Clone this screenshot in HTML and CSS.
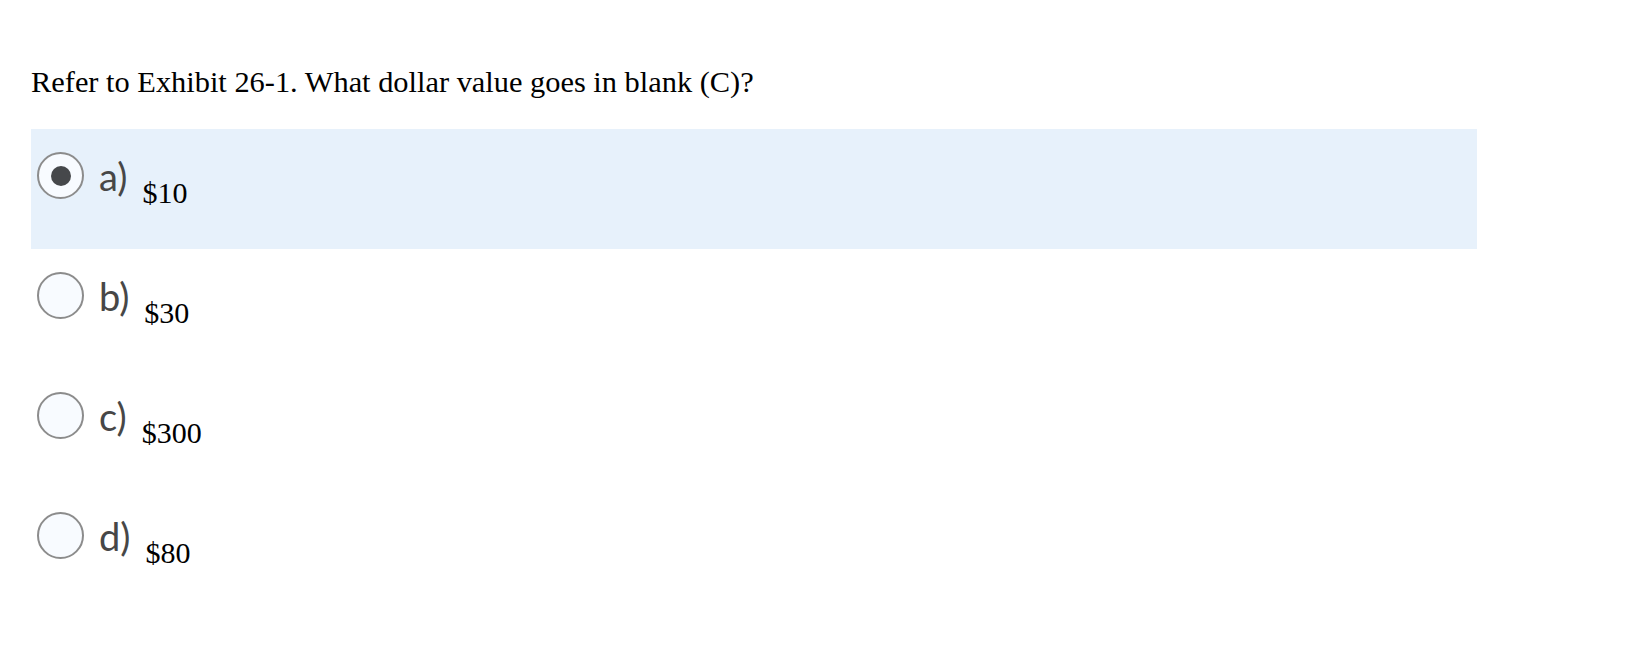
FILE: index.html
```html
<!DOCTYPE html>
<html lang="en">
<head>
    <meta charset="UTF-8">
    <meta name="viewport" content="width=device-width, initial-scale=1.0">
    <title>Question</title>
    <link rel="stylesheet" href="styles.css">
</head>
<body>
    <div class="question">
        <p class="question-text">Refer to Exhibit 26-1. What dollar value goes in blank (C)?</p>
        <div class="answers">
            <label class="answer selected">
                <input type="radio" name="q1" value="a" checked>
                <span class="letter">a)</span>
                <span class="value">$10</span>
            </label>
            <label class="answer">
                <input type="radio" name="q1" value="b">
                <span class="letter">b)</span>
                <span class="value">$30</span>
            </label>
            <label class="answer">
                <input type="radio" name="q1" value="c">
                <span class="letter">c)</span>
                <span class="value">$300</span>
            </label>
            <label class="answer">
                <input type="radio" name="q1" value="d">
                <span class="letter">d)</span>
                <span class="value">$80</span>
            </label>
        </div>
    </div>
</body>
</html>
```

FILE: styles.css
```css
body { margin: 0; background: #fff; }
.question { padding: 64px 0 0 31px; width: 1446px; }
.question-text { margin: 0 0 29px; font-family: "Liberation Serif", "Times New Roman", serif; font-size: 30.4px; line-height: 36px; color: #000; }
.answers { display: flex; flex-direction: column; }
.answer { display: flex; align-items: flex-start; height: 120px; padding: 23px 6px 0; box-sizing: border-box; cursor: pointer; }
.answer.selected { background: #e7f1fb; }
.answer input { appearance: none; -webkit-appearance: none; margin: 0; width: 47px; height: 47px; border: 2px solid #8c8c8c; border-radius: 50%; background: #f8fbff; box-sizing: border-box; display: flex; align-items: center; justify-content: center; flex-shrink: 0; }
.answer input:checked::after { content: ""; width: 20px; height: 20px; border-radius: 50%; background: #46484b; }
.letter { margin: 5px 0 0 15px; font-family: Lato, "Open Sans", sans-serif; font-size: 38px; line-height: 38px; color: #474747; }
.value { margin: 26px 0 0 15px; font-family: "Liberation Serif", "Times New Roman", serif; font-size: 30px; line-height: 30px; color: #000; }
```
